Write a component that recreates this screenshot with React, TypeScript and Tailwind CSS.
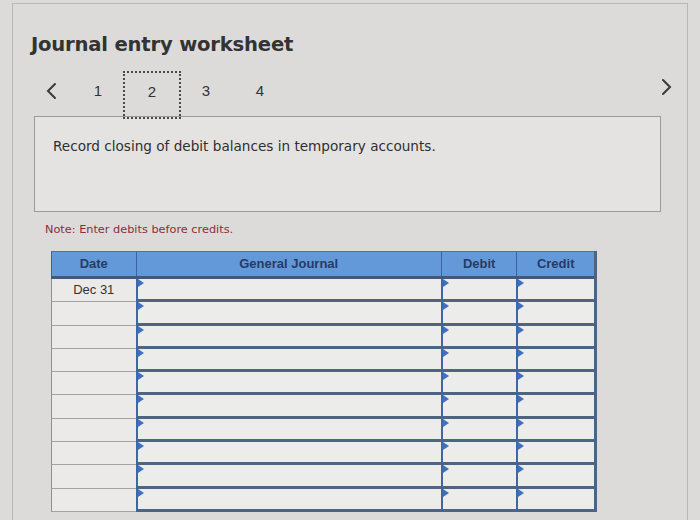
const COLS = ['Date', 'General Journal', 'Debit', 'Credit']
const ROWS = ['Dec 31', '', '', '', '', '', '', '', '', '']

function Flag() {
  return (
    <span className="absolute left-0 top-0 w-0 h-0 border-t-[4px] border-b-[4px] border-l-[6px] border-t-transparent border-b-transparent border-l-[#3f6fc2]" />
  )
}

function InputCell({ w }: { w: string }) {
  return (
    <div className={`${w} relative h-full bg-[#ececea] border-l-2 border-l-[#3d67a6] border-b-[3px] border-b-[#4d6483]`}>
      <Flag />
    </div>
  )
}

function Chevron({ dir }: { dir: 'left' | 'right' }) {
  return (
    <svg width="14" height="18" viewBox="0 0 14 18" fill="none" stroke="#3a3a3a" strokeWidth="2" strokeLinecap="round">
      {dir === 'left' ? <path d="M10 2 L3 9 L10 16" /> : <path d="M4 2 L11 9 L4 16" />}
    </svg>
  )
}

export default function App() {
  return (
    <div className="w-[700px] h-[520px] bg-[#dcdbd9] overflow-hidden">
      <div className="ml-[12px] mt-[3px] h-[540px] w-[676px] border-l border-t border-r border-[#b8b7b5] pl-[18px] pt-[27px]">
        <h1 className="text-[19.6px] leading-[28px] font-bold text-[#333] font-['DejaVu_Sans',sans-serif] tracking-[-0.2px]">
          Journal entry worksheet
        </h1>

        <div className="mt-[12px] h-[48px] flex items-center font-['Liberation_Sans',Arial,sans-serif] text-[15px] text-[#333]">
          <div className="w-[40px] flex justify-center pl-[2px] -mt-[8px]">
            <Chevron dir="left" />
          </div>
          {['1', '2', '3', '4'].map((n) =>
            n === '2' ? (
              <div
                key={n}
                className="relative z-10 w-[58px] h-[48px] -mx-[2px] pb-[6px] flex items-center justify-center border-2 border-dotted border-[#4a4a4a]"
              >
                {n}
              </div>
            ) : (
              <div key={n} className="w-[54px] text-center pb-[8px]">
                {n}
              </div>
            ),
          )}
          <div className="flex-1" />
          <div className="w-[40px] flex justify-center -mt-[16px] pr-[2px]">
            <Chevron dir="right" />
          </div>
        </div>

        <div className="-mt-[3px] ml-[3px] w-[627px] h-[96px] border border-[#9c9b99] bg-[#e4e3e1] pl-[18px] pt-[20px]">
          <p className="text-[13.6px] leading-[18px] text-[#2f2f2f] font-['DejaVu_Sans',sans-serif]">
            Record closing of debit balances in temporary accounts.
          </p>
        </div>

        <p className="mt-[10px] ml-[14px] text-[11.3px] leading-[16px] text-[#8e2b3c] font-['DejaVu_Sans',sans-serif]">
          Note: Enter debits before credits.
        </p>

        <div className="mt-[13px] ml-[20px] w-[546px] font-['Liberation_Sans',Arial,sans-serif] border-r-[3px] border-r-[#4d6483]">
          <div className="flex h-[28px] bg-[#6399d8] border-t border-t-[#4a73aa] border-b-[3px] border-b-[#44597a] text-[13px] font-bold text-[#263c66]">
            {COLS.map((c, i) => (
              <div
                key={c}
                className={`${['w-[85px]', 'w-[307px]', 'w-[76px]', 'w-[78px]'][i]} flex items-center justify-center border-l border-l-[#3d62a0]`}
              >
                {c}
              </div>
            ))}
          </div>
          {ROWS.map((d, i) => (
            <div key={i} className="flex h-[23.3px]">
              <div className="w-[85px] h-full bg-[#ebeae8] border-l border-l-[#8f8f8f] border-b border-b-[#a3a3a1] flex items-center justify-center text-[13px] text-[#333]">
                {d}
              </div>
              <InputCell w="w-[307px]" />
              <InputCell w="w-[76px]" />
              <InputCell w="w-[78px]" />
            </div>
          ))}
        </div>
      </div>
    </div>
  )
}
